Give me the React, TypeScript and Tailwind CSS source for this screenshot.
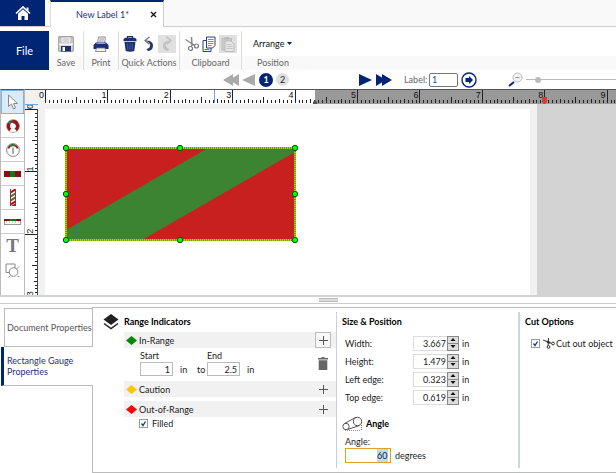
import React from "react";

const INCH = 62.4;
const SIXTEENTHS = Array.from({ length: 320 }, (_, i) => i);
const RULER_LABELS = Array.from({ length: 10 }, (_, i) => i);

function tickLength(i: number) {
  if (i % 16 === 0) return 13;
  if (i % 8 === 0) return 6;
  if (i % 4 === 0) return 4;
  return 3;
}

function HorizontalRuler() {
  return (
    <svg className="block h-[15px] w-full" aria-hidden="true">
      <rect x="20" y="0" width="270" height="15" fill="#fff" />
      <rect x="290" y="0" width="100%" height="15" fill="#999" />
      {SIXTEENTHS.map((i) => (
        <rect key={i} x={Math.round(20 + (i * INCH) / 16)} y={14 - tickLength(i)} width="1" height={tickLength(i)} fill="#222" />
      ))}
      {RULER_LABELS.map((n) => (
        <text key={n} x={19 + n * INCH} y="9" textAnchor="end" fontSize="9" fill="#111">
          {n}
        </text>
      ))}
      <rect x="189" y="0" width="1" height="14" fill="#6aa5e8" />
      <path d="M288 15v-2l2-2 2 2v2z" fill="#555" />
      <path d="M517 8h5v5l-2 2h-1l-2-2z" fill="#d43c3c" />
      <rect x="0" y="0" width="100%" height="1" fill="#555" />
    </svg>
  );
}

function VerticalRuler() {
  return (
    <svg className="block h-full w-[13px] shrink-0" aria-hidden="true">
      <rect x="0" y="5" width="13" height="100%" fill="#fff" />
      <rect x="0" y="5" width="13" height="1" fill="#666" />
      {SIXTEENTHS.slice(0, 60).map((i) => (
        <rect key={i} x={13 - tickLength(i)} y={Math.round(5 + (i * INCH) / 16)} width={tickLength(i)} height="1" fill="#222" />
      ))}
      {RULER_LABELS.slice(0, 4).map((n) => (
        <text key={n} transform={`translate(8 ${5 + n * INCH}) rotate(-90)`} fontSize="9" fill="#223">
          {n}
        </text>
      ))}
      <rect x="12" y="5" width="1" height="100%" fill="#444" />
      <rect x="0" y="0" width="13" height="1" fill="#6aa5e8" />
    </svg>
  );
}

function RibbonGroup({ label, width, children }: { label: string; width: string; children: React.ReactNode }) {
  return (
    <div className={`flex h-[39px] flex-col border-r border-[#ddd] ${width}`}>
      <div className="flex h-[25px] items-center justify-center">{children}</div>
      <div className="h-[14px] bg-[#f9f9f9] text-center leading-[13px] text-[#666]">{label}</div>
    </div>
  );
}

const SaveIcon = () => (
  <svg width="16" height="16" viewBox="0 0 16 16">
    <path d="M.8.800h14.400v14.400H.8z" fill="#ddd" stroke="#8a8a8a" />
    <path d="M3 1h10v6H3z" fill="#fff" stroke="#999" strokeWidth=".8" />
    <path d="M4.500 3h7M4.500 5h7" stroke="#aaa" />
    <path d="M1 7.500h14V9H1z" fill="#f4f4f4" />
    <path d="M3 10h10v5.500H3z" fill="#1d2f73" />
    <path d="M4.500 11h2.500v4H4.500z" fill="#fff" />
  </svg>
);

const PrintIcon = () => (
  <svg width="16" height="16" viewBox="0 0 16 16">
    <path d="M4.500 8L5.500 1h7l-1 7z" fill="#f4f4f4" stroke="#777" strokeWidth=".8" />
    <path d="M6.500 3h4.500M6 5h4.500" stroke="#999" />
    <path d="M3 6.500h10l2.500 2.500v4H.5V9z" fill="#1d2f73" />
    <path d="M3.500 7.500h9" stroke="#9a9fb7" />
    <path d="M3.500 12h8.500l1 3.500H2.500z" fill="#f0f0f0" stroke="#777" strokeWidth=".8" />
  </svg>
);

const BinIcon = () => (
  <svg width="14" height="16" viewBox="0 0 14 16">
    <path d="M4.500 2V.7h5V2" fill="none" stroke="#1d2f73" strokeWidth="1.300" />
    <path d="M2 1.800h10l1.500 1.400V5.300H.5V3.200zM1.500 6h11l-1.200 9q-4.300 1.600-8.600 0z" fill="#1d2f73" />
    <path d="M4.500 7.500l.4 6.500M7 7.500v6.500M9.500 7.500l-.4 6.500" stroke="#5d6ba1" strokeWidth=".7" />
  </svg>
);

const UndoIcon = () => (
  <svg width="10" height="16" viewBox="0 0 10 16">
    <path d="M5.500 1L1 4.500 5 8" fill="none" stroke="#777" strokeWidth="1.300" />
    <path d="M1.500 4.500Q9 4.500 9 9.500T4 15l-1.500-2Q6 12 6 9.500 6 6 1.500 4.500" fill="#2a3765" />
  </svg>
);

const RedoIcon = () => (
  <svg width="10" height="16" viewBox="0 0 10 16">
    <path d="M4.500 1L9 4.500 5 8" fill="none" stroke="#bbb" strokeWidth="1.300" />
    <path d="M8.500 4.500Q1 4.500 1 9.500T6 15l1.500-2Q4 12 4 9.500 4 6 8.500 4.500" fill="#c2c2c8" />
  </svg>
);

const CutIcon = () => (
  <svg width="14" height="16" viewBox="0 0 14 16">
    <path d="M.5 3.500l9 6M6.500 1L7 9.500" stroke="#888" strokeWidth="1.500" />
    <circle cx="5.500" cy="12.500" r="2" fill="none" stroke="#777" strokeWidth="1.200" />
    <circle cx="11.500" cy="10" r="2" fill="none" stroke="#777" strokeWidth="1.200" />
    <path d="M6.500 10.500L7.500 8l2.300 1.300" fill="none" stroke="#777" />
  </svg>
);

const CopyIcon = () => (
  <svg width="14" height="16" viewBox="0 0 14 16">
    <path d="M1 4.500h8v11H1z" fill="#fff" stroke="#2b3e83" />
    <path d="M2.500 13.500h5" stroke="#4a7ac0" />
    <path d="M4.500 1h8.500v8.500L10.500 12h-6z" fill="#fff" stroke="#2b3e83" />
    <path d="M6 3.500h5.500M6 5.500h5.500M6 7.500h5.500M6 9.500h3.500" stroke="#5b80bd" strokeWidth=".9" />
  </svg>
);

const PasteIcon = () => (
  <svg width="14" height="16" viewBox="0 0 14 16">
    <path d="M1 2.500h9.500V14H1z" fill="#ccc" stroke="#bbb" />
    <path d="M3.500 1h4.500v2.500H3.500z" fill="#bbb" />
    <path d="M4 5h6l3 3v7.500H4z" fill="#e6e6e6" stroke="#bbb" />
    <path d="M5.500 8.500h5M5.500 10.500h6M5.500 12.500h6" stroke="#bbb" strokeWidth=".8" />
  </svg>
);

const Scissors = () => (
  <svg width="12" height="12" viewBox="0 0 12 12">
    <path d="M0 3l9 3.500M5 10L5.500 1" stroke="#333" />
    <path d="M4 4.500L7 6" stroke="#333" strokeWidth="2" />
    <circle cx="10" cy="6.500" r="1.400" fill="#fff" stroke="#333" />
    <circle cx="5.500" cy="10" r="1.400" fill="#fff" stroke="#333" />
  </svg>
);

function Tool({ label, active, children }: { label: string; active?: boolean; children: React.ReactNode }) {
  return (
    <button
      aria-label={label}
      className={`flex h-6 w-full shrink-0 items-center justify-center border-b ${active ? "border border-[#7db4e0] bg-[#d9eafa]" : "border-[#ccc]"}`}
    >
      {children}
    </button>
  );
}

function Toolbox() {
  return (
    <div className="flex w-[25px] shrink-0 flex-col overflow-hidden border-t border-r border-l border-[#bbb] border-t-[#555] bg-white">
      <Tool label="Select" active>
        <svg width="12" height="16" viewBox="0 0 12 16">
          <path d="M1.500 1v11.500l3-2.500 2 5 2-1-2-4.500h4z" fill="#fff" stroke="#888" />
        </svg>
      </Tool>
      <Tool label="Ring gauge">
        <svg width="14" height="14" viewBox="0 0 14 14">
          <circle cx="7" cy="7" r="6.400" fill="#fff" stroke="#888" strokeWidth=".7" />
          <path d="M4.300 10.800A4.600 4.600 0 0 1 3.500 4" fill="none" stroke="#9c1420" strokeWidth="3.400" />
          <path d="M9.700 10.800A4.600 4.600 0 0 0 7 2.500" fill="none" stroke="#9c1420" strokeWidth="3.400" />
          <path d="M3.500 3.800A4.600 4.600 0 0 1 7 2.500" fill="none" stroke="#3b5b35" strokeWidth="3" />
          <path d="M7.500 9L5.500 4.500" stroke="#fff" strokeWidth="1.300" />
        </svg>
      </Tool>
      <Tool label="Dial gauge">
        <svg width="14" height="14" viewBox="0 0 14 14">
          <circle cx="7" cy="7" r="6.400" fill="#fff" stroke="#777" strokeWidth=".9" />
          <path d="M2.300 5.500A5 5 0 0 1 11.700 5.500" fill="none" stroke="#a01a24" strokeWidth="1.700" />
          <path d="M4 3A5 5 0 0 1 8.500 2.300" fill="none" stroke="#2f7d32" strokeWidth="2" />
          <path d="M7 4.500v6.500" stroke="#555" />
        </svg>
      </Tool>
      <Tool label="Rectangle gauge">
        <svg width="17" height="6">
          <rect width="17" height="6" fill="#8e0d12" />
          <rect x="6" width="5" height="6" fill="#0b7a1c" />
        </svg>
      </Tool>
      <Tool label="Striped gauge">
        <svg width="6" height="17" viewBox="0 0 6 17">
          <rect width="6" height="17" fill="#fff" />
          <path d="M0 4l6-4M0 16l6-4M0 19l6-4" stroke="#9c1420" strokeWidth="2" />
          <path d="M0 8l6-4M0 12l6-4" stroke="#2f7d32" strokeWidth="2" />
          <path d="M.5 0v17M5.500 0v17" stroke="#a0303a" />
        </svg>
      </Tool>
      <Tool label="Linear gauge">
        <svg width="17" height="6">
          <rect x=".5" y=".5" width="16" height="5" fill="#fff" stroke="#999" />
          <rect width="17" height="2" fill="#8e0d12" />
          <rect x="5" width="7" height="2" fill="#0b7a1c" />
          <path d="M2 3h14" stroke="#999" strokeDasharray="1 2" />
        </svg>
      </Tool>
      <button aria-label="Text" className="h-6 w-full shrink-0 font-['Liberation_Serif',serif] text-[19px] leading-6 font-bold text-[#777]">
        T
      </button>
      <button aria-label="Shapes" className="flex h-6 w-full shrink-0 items-center justify-center">
        <svg width="15" height="15" viewBox="0 0 15 15" fill="none" stroke="#888">
          <path d="M5 9.500H1V1h9v4" />
          <circle cx="8.500" cy="9" r="4.300" fill="#fff" />
          <path d="M3.500 14.500l2-2M11.500 6l2.500-2.500M12.500 13.500h2" />
        </svg>
      </button>
    </div>
  );
}

const HANDLES = [
  [4, 4], [118, 4], [233, 4], [4, 50], [233, 50], [4, 96], [118, 96], [233, 96],
];

function GaugeObject() {
  return (
    <svg className="absolute top-[35px] left-[17px]" width="238" height="102" aria-label="Rectangle gauge object">
      <rect x="4" y="4" width="229" height="92" fill="#c8201f" />
      <path d="M4 86L146 4H233V8L80 96H4z" fill="#3c8431" />
      <rect x="4" y="4" width="229" height="92" fill="none" stroke="#a5dc10" strokeWidth="2" />
      <rect x="4" y="4" width="229" height="92" fill="none" stroke="#1c5c10" strokeWidth="1" strokeDasharray="1 1" />
      {HANDLES.map(([x, y]) => (
        <circle key={`${x}-${y}`} cx={x} cy={y} r="2.700" fill="#0f0" stroke="#075007" />
      ))}
    </svg>
  );
}

function PanelTitle({ children }: { children: React.ReactNode }) {
  return <h2 className="h-5 leading-5 font-bold text-black">{children}</h2>;
}

function RangeHeader({ name, color, framed }: { name: string; color: string; framed?: boolean }) {
  return (
    <div className="flex h-4 items-center bg-[#f1f1f1] pl-0.5 text-[#222]">
      <svg width="11" height="9" viewBox="0 0 11 9">
        <path d="M5.500 0L11 4.500 5.500 9 0 4.500z" fill={color} />
      </svg>
      <span className="ml-0.5 flex-1">{name}</span>
      <button
        aria-label={`Add ${name}`}
        className={`mr-[5px] flex h-4 w-4 items-center justify-center ${framed ? "border border-[#bbb] bg-[#f8f8f8]" : ""}`}
      >
        <svg className="shrink-0" width="9" height="9">
          <path d="M4.500 0v9M0 4.500h9" stroke="#555" />
        </svg>
      </button>
    </div>
  );
}

function LimitField({ label, value }: { label: string; value: string }) {
  return (
    <label className="block w-[33px]">
      <span className="block h-3 leading-3">{label}</span>
      <input defaultValue={value} className="block h-[14px] w-full border border-[#bbb] bg-white px-0.5 text-right" />
    </label>
  );
}

function Check({ label, icon }: { label: string; icon?: React.ReactNode }) {
  return (
    <label className="flex h-3 items-center whitespace-nowrap">
      <span className="grid h-[9px] w-[9px]">
        <input type="checkbox" defaultChecked className="peer col-start-1 row-start-1 h-[9px] w-[9px] appearance-none border border-[#999] bg-white" />
        <svg className="pointer-events-none invisible col-start-1 row-start-1 peer-checked:visible" width="9" height="9">
          <path d="M2.500 4.500l1.500 2 2.500-4" fill="none" stroke="#123a8c" strokeWidth="1.300" />
        </svg>
      </span>
      {icon ? <span className="ml-[3px]">{icon}</span> : <span className="w-[3px]" />}
      <span className="ml-px">{label}</span>
    </label>
  );
}

function SizeField({ label, value }: { label: string; value: string }) {
  return (
    <div className="flex h-[18px] items-center pl-[3px]">
      <label className="flex items-center">
        <span className="w-[68px]">{label}</span>
        <input defaultValue={value} className="h-[15px] w-[34px] border border-r-0 border-[#ddd] bg-white pr-px text-right" />
      </label>
      <span className="flex h-[15px] w-3 flex-col border border-[#888] bg-[#ddd]">
        <button aria-label={`Increase ${label}`} className="flex flex-1 items-center justify-center border-b border-[#888]">
          <svg width="6" height="3"><path d="M3 0l2.500 3h-5z" fill="#111" /></svg>
        </button>
        <button aria-label={`Decrease ${label}`} className="flex flex-1 items-center justify-center">
          <svg width="6" height="3"><path d="M3 3L.5 0h5z" fill="#111" /></svg>
        </button>
      </span>
      <span className="ml-[3px]">in</span>
    </div>
  );
}

export default function App() {
  return (
    <div className="flex flex-col overflow-hidden bg-white font-[Lato,'Noto_Sans',sans-serif] text-[9px] leading-[11px] text-[#222]">
      <header className="flex h-[27px] border-b border-[#ccc] bg-[#f9f9f9]">
        <button aria-label="Home" className="flex h-[26px] w-[45px] items-center justify-center bg-[#002575]">
          <svg width="16" height="14" viewBox="0 0 16 14">
            <path d="M1 7.500L8 1l7 6.500" fill="none" stroke="#fff" strokeWidth="1.700" />
            <path d="M11.500 1.500h2v4l-2-2z" fill="#fff" />
            <path d="M3 7.800l5-4.500 5 4.500V14H9.500v-4h-3v4H3z" fill="#fff" />
          </svg>
        </button>
        <div className="ml-[5px] flex h-[27px] w-[114px] items-center justify-between border-t-2 border-r border-l border-t-[#002575] border-r-[#ccc] border-l-[#ddd] bg-white pr-1.5 pl-[25px] text-[#1f2f7a]">
          <span>New Label 1*</span>
          <button aria-label="Close tab">
            <svg width="7" height="7"><path d="M1 1l5 5M6 1L1 6" stroke="#111" strokeWidth="1.300" /></svg>
          </button>
        </div>
      </header>

      <div className="flex h-[43px] pt-1">
        <button className="h-[39px] w-[49px] bg-[#002575] text-[11px] text-white">File</button>
        <RibbonGroup label="Save" width="w-[35px]">
          <button aria-label="Save"><SaveIcon /></button>
        </RibbonGroup>
        <RibbonGroup label="Print" width="w-[35px]">
          <button aria-label="Print"><PrintIcon /></button>
        </RibbonGroup>
        <RibbonGroup label="Quick Actions" width="w-[61px]">
          <button aria-label="Delete"><BinIcon /></button>
          <button aria-label="Undo" className="pr-1 pl-[7px]"><UndoIcon /></button>
          <button aria-label="Redo" disabled className="flex h-[18px] w-[18px] items-center justify-center bg-[#e0e0e0]"><RedoIcon /></button>
        </RibbonGroup>
        <RibbonGroup label="Clipboard" width="w-[62px]">
          <button aria-label="Cut"><CutIcon /></button>
          <button aria-label="Copy" className="px-[3px]"><CopyIcon /></button>
          <button aria-label="Paste" disabled className="flex h-[18px] w-[18px] items-center justify-center bg-[#e0e0e0]"><PasteIcon /></button>
        </RibbonGroup>
        <div className="flex h-[39px] flex-1 flex-col">
          <div className="flex h-[25px] items-center pl-[11px]">
            <button className="flex items-center gap-[3px] text-[#111]">
              Arrange
              <svg width="5" height="3"><path d="M0 0h5L2.500 3z" fill="#002575" /></svg>
            </button>
          </div>
          <div className="h-[14px] bg-[#f9f9f9] pl-[15px] leading-[13px] text-[#666]">Position</div>
        </div>
      </div>

      <nav className="flex h-[19px] items-center overflow-hidden pl-[223px]">
        <button aria-label="First label">
          <svg width="16" height="12"><path d="M10 0v12L0 6zM16 0v12L6 6z" fill="#aaa" /></svg>
        </button>
        <button aria-label="Previous label" className="ml-[3px]">
          <svg width="13" height="12"><path d="M13 0v12L0 6z" fill="#aaa" /></svg>
        </button>
        <button className="ml-1 h-[14px] w-[14px] rounded-full bg-[#002575] leading-[14px] font-bold text-white">1</button>
        <button className="ml-[3px] h-[13px] w-[13px] rounded-full bg-[#e0e0e0] leading-[13px]">2</button>
        <button aria-label="Next label" className="ml-[70px]">
          <svg width="13" height="12"><path d="M0 0v12l13-6z" fill="#002575" /></svg>
        </button>
        <button aria-label="Last label" className="ml-1">
          <svg width="16" height="12"><path d="M0 0v12l10-6zM6 0v12l10-6z" fill="#002575" /></svg>
        </button>
        <label className="ml-3 flex items-center text-[#666]">
          <span className="w-[25px]">Label:</span>
          <input defaultValue="1" className="h-[14px] w-[29px] rounded-[2px] border border-[#777] pl-0.5 text-[#1f4f9c]" />
        </label>
        <button aria-label="Go to label" className="ml-[3px]">
          <svg width="16" height="16" viewBox="0 0 16 16">
            <circle cx="8" cy="8" r="7" fill="#fff" stroke="#002575" strokeWidth="1.400" />
            <path d="M4.500 6h3.500V4l4 4-4 4v-2H4.500z" fill="#002575" />
          </svg>
        </button>
        <button aria-label="Zoom out" className="ml-[31px]">
          <svg width="15" height="15" viewBox="0 0 15 15">
            <path d="M1 14l5-4" stroke="#002575" strokeWidth="2" />
            <circle cx="9.500" cy="5.500" r="4.500" fill="#f3f3f3" stroke="#bbb" />
            <path d="M7.500 5.500h4" stroke="#999" />
          </svg>
        </button>
        <input
          type="range"
          aria-label="Zoom"
          defaultValue="4"
          className="ml-[3px] h-[7px] min-w-[88px] flex-1 appearance-none bg-[linear-gradient(#bbb,#bbb)] bg-[length:100%_1px] bg-center bg-no-repeat [&::-webkit-slider-thumb]:ml-1.5 [&::-webkit-slider-thumb]:h-1.5 [&::-webkit-slider-thumb]:w-1.5 [&::-webkit-slider-thumb]:appearance-none [&::-webkit-slider-thumb]:rounded-full [&::-webkit-slider-thumb]:bg-[#bbb]"
        />
      </nav>

      <main className="flex h-[206px] overflow-hidden bg-[#f1f1f1] font-['Liberation_Sans',sans-serif]">
        <Toolbox />
        <div className="flex min-w-0 flex-1 flex-col">
          <HorizontalRuler />
          <div className="flex min-h-0 flex-1">
            <VerticalRuler />
            <div className="flex min-w-0 flex-1 bg-[#d3d3d3]">
              <div className="w-[499px] shrink-0 bg-[#f1f1f1] px-[7px] pt-[5px]">
                <div className="relative h-full bg-white">
                  <GaugeObject />
                </div>
              </div>
            </div>
          </div>
        </div>
      </main>

      <div className="h-[9px] border-t-2 border-b border-t-[#d3d3d3] border-b-[#ccc]">
        <div className="mx-auto mt-px h-1 w-[19px] translate-x-5 border-y border-[#bbb] bg-[#ddd]" />
      </div>

      <section className="flex pt-[3px]">
        <div className="z-10 -mr-px w-[93px] shrink-0 pt-px">
          <button className="ml-1 block h-[39px] w-[88px] border border-r-0 border-[#bbb] pl-0.5 text-left whitespace-nowrap text-[#555]">
            Document Properties
          </button>
          <button className="ml-px block h-[39px] w-[92px] border-b border-l-[3px] border-b-[#bbb] border-l-[#002575] bg-white pr-3 pl-[3px] text-left text-[#1f2f7a]">
            Rectangle Gauge Properties
          </button>
        </div>
        <div className="flex min-h-[166px] min-w-0 flex-1 border-y border-l border-[#bbb] py-1">
          <div className="flex w-[244px] shrink-0 border-r border-[#ccd0d6] pl-2.5">
            <svg className="mt-0.5 shrink-0" width="16" height="16" viewBox="0 0 16 16">
              <path d="M8 0l7.500 5.500L8 11 .5 5.500z" fill="#222" />
              <path d="M1 9.500l7 5 7-5" fill="none" stroke="#222" strokeWidth="1.500" />
            </svg>
            <div className="ml-[5px] flex-1">
              <PanelTitle>Range Indicators</PanelTitle>
              <RangeHeader name="In-Range" color="#0a850a" framed />
              <div className="flex h-[33px] pt-0.5 pl-4">
                <LimitField label="Start" value="1" />
                <span className="mt-[14px] ml-[7px] w-[17px]">in</span>
                <span className="mt-[14px] w-[10px]">to</span>
                <LimitField label="End" value="2.5" />
                <span className="mt-[14px] ml-[7px]">in</span>
                <button aria-label="Remove range" className="mt-[7px] mr-2 ml-auto h-[13px]">
                  <svg width="10" height="13" viewBox="0 0 10 13">
                    <path d="M0 1h3l1-1h2l1 1h3v1.500H0zM.7 3.300h8.600V13H.7z" fill="#666" />
                  </svg>
                </button>
              </div>
              <RangeHeader name="Caution" color="#ffc50a" />
              <div className="h-1" />
              <RangeHeader name="Out-of-Range" color="#fb0505" />
              <div className="pl-[15px]"><Check label="Filled" /></div>
            </div>
          </div>
          <div className="w-[183px] shrink-0 border-r-2 border-[#ccd6e2] pl-[5px]">
            <PanelTitle>Size &amp; Position</PanelTitle>
            <div className="pt-0.5">
              <SizeField label="Width:" value="3.667" />
              <SizeField label="Height:" value="1.479" />
              <SizeField label="Left edge:" value="0.323" />
              <SizeField label="Top edge:" value="0.619" />
            </div>
            <div className="flex items-center gap-[3px] pt-2">
              <svg width="21" height="16" viewBox="0 0 21 16" fill="none" stroke="#555">
                <circle cx="4" cy="10.500" r="3.200" />
                <circle cx="15.500" cy="5.500" r="4.200" />
                <path d="M2.500 7.500L14 1.200M5.500 13.500L17.500 9.500" />
                <path d="M3 14.500h16" stroke="#999" strokeDasharray="1 1" />
                <path d="M19.500 9v5" stroke="#e33" strokeDasharray="1 1" />
              </svg>
              <PanelTitle>Angle</PanelTitle>
            </div>
            <div className="pt-0.5 pl-[3px]">
              <label htmlFor="angle" className="block">Angle:</label>
              <div className="mt-px flex items-center gap-1">
                <span className="flex h-[15px] w-[46px] justify-end border border-[#dba030] pr-0.5">
                  <input id="angle" defaultValue="60" className="h-[13px] w-[11px] bg-[#bcdcf6]" />
                </span>
                degrees
              </div>
            </div>
          </div>
          <div className="min-w-0 flex-1 pl-[5px]">
            <PanelTitle>Cut Options</PanelTitle>
            <div className="pt-[5px] pl-[6px]"><Check label="Cut out object" icon={<Scissors />} /></div>
          </div>
        </div>
      </section>
    </div>
  );
}
